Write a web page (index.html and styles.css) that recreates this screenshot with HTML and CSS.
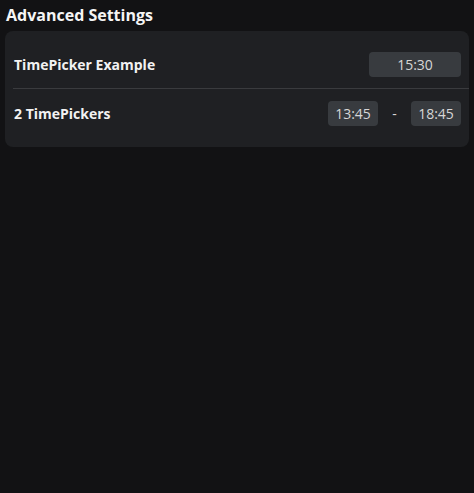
FILE: index.html
```html
<!DOCTYPE html>
<html>
<head>
<meta charset="utf-8">
<link rel="stylesheet" href="styles.css">
</head>
<body>
<h1 class="title">Advanced Settings</h1>
<div class="card">
  <div class="row">
    <span class="label">TimePicker Example</span>
    <div class="picker wide">15:30</div>
  </div>
  <div class="divider"></div>
  <div class="row">
    <span class="label">2 TimePickers</span>
    <div class="range">
      <div class="picker">13:45</div>
      <span class="dash">-</span>
      <div class="picker">18:45</div>
    </div>
  </div>
</div>
</body>
</html>
```
FILE: styles.css
```css
html, body {
  margin: 0;
  padding: 0;
  background: #121214;
  font-family: "Open Sans", "Noto Sans", sans-serif;
  color: #f2f2f2;
}
body {
  padding: 0 5px;
}
.title {
  margin: 0;
  padding: 4px 1px 0;
  height: 27px;
  font-size: 16px;
  font-weight: 700;
  line-height: 22px;
  color: #f5f5f5;
}
.card {
  background: #1f2023;
  border-radius: 8px;
  padding: 9px 8px 10px 8px;
}
.row {
  height: 48px;
  display: flex;
  align-items: center;
  justify-content: space-between;
  padding-left: 1px;
}
.label {
  font-size: 14px;
  font-weight: 700;
  color: #f2f2f2;
}
.divider {
  height: 1px;
  background: #3a3b3e;
  margin-right: -8px;
}
.picker {
  background: #383b3f;
  border-radius: 4px;
  width: 50px;
  height: 25px;
  display: flex;
  align-items: center;
  justify-content: center;
  font-size: 14px;
  color: #d6d6d6;
}
.picker.wide {
  width: 92px;
}
.range {
  display: flex;
  align-items: center;
}
.dash {
  width: 33px;
  text-align: center;
  font-size: 14px;
  color: #d6d6d6;
}
```
